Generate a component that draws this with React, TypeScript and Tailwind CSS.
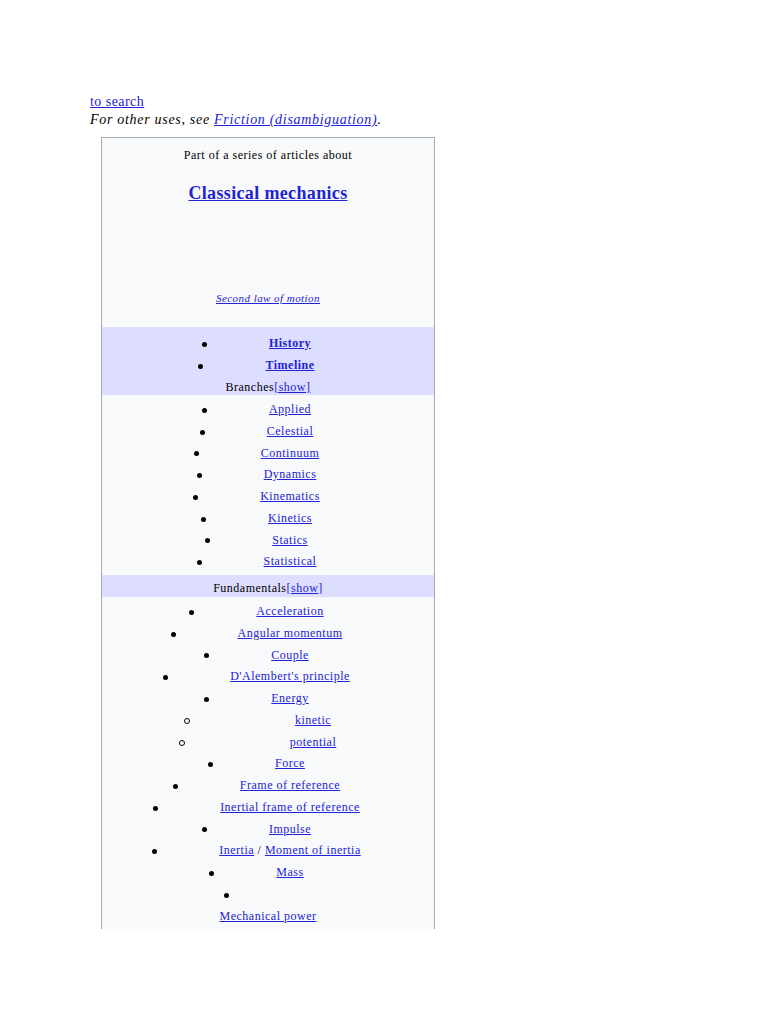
import React from "react";

const link = "text-[#2222d8] underline";

function Dot() {
  return <span className="inline-block w-[5px] h-[5px] rounded-full bg-black align-middle" />;
}

function Ring() {
  return <span className="inline-block w-[6px] h-[6px] rounded-full border border-black align-middle" />;
}

function Item({ children, bold = false }: { children: React.ReactNode; bold?: boolean }) {
  return (
    <div className="h-[21.75px] leading-[21.75px] text-center whitespace-nowrap">
      <span className="inline-block w-[67px] -ml-[67px] text-left">
        <Dot />
      </span>
      <span className={bold ? "font-bold" : ""}>{children}</span>
    </div>
  );
}

function SubItem({ children }: { children: React.ReactNode }) {
  return (
    <div className="h-[21.75px] leading-[21.75px] text-center whitespace-nowrap">
      <span className="inline-block w-[111px] -ml-[111px] text-left">
        <Ring />
      </span>
      <span>{children}</span>
    </div>
  );
}

function L({ children, bold = false }: { children: React.ReactNode; bold?: boolean }) {
  return <a className={link + (bold ? " font-bold text-[#1a1ab8]" : "")}>{children}</a>;
}

export default function App() {
  return (
    <div className="min-h-[1024px] bg-white text-black pl-[90px] pt-[93px]" style={{ fontFamily: '"Liberation Serif", "Times New Roman", serif' }}>
      <div className="text-[14px] leading-[18px] tracking-[0.45px]">
        <a className={link}>to search</a>
      </div>
      <div className="text-[14px] leading-[18px] italic tracking-[0.7px]">
        For other uses, see <a className={link}>Friction (disambiguation)</a>.
      </div>
      <div className="ml-[11px] mt-[8px] w-[334px] h-[792px] border border-b-0 border-[#a2a9b1] bg-[#f8f9fa] text-[12px] tracking-[0.5px]">
        <div className="pt-[8px] text-center leading-[18px]">Part of a series of articles about</div>
        <div className="mt-[17px] text-center text-[18px] leading-[24px] font-bold tracking-[0.35px]">
          <a className="text-[#2222d8] underline">Classical mechanics</a>
        </div>
        <div className="h-[85px]" />
        <div className="text-center italic text-[11px] leading-[16px] tracking-[0.45px]">
          <a className={link}>Second law of motion</a>
        </div>
        <div className="mt-[21px] bg-[#ddddff] pt-[6px] h-[68px]">
          <div className="pl-[44px]">
            <Item><L bold>History</L></Item>
            <Item><L bold>Timeline</L></Item>
          </div>
          <div className="text-center leading-[20px]">
            Branches<a className={link}>[show]</a>
          </div>
        </div>
        <div className="pl-[44px] pt-[4px] pb-[2px]">
          <Item><L>Applied</L></Item>
          <Item><L>Celestial</L></Item>
          <Item><L>Continuum</L></Item>
          <Item><L>Dynamics</L></Item>
          <Item><L>Kinematics</L></Item>
          <Item><L>Kinetics</L></Item>
          <Item><L>Statics</L></Item>
          <Item><L>Statistical</L></Item>
        </div>
        <div className="bg-[#ddddff] h-[22px] pt-[4px] leading-[18px] text-center">
          Fundamentals<a className={link}>[show]</a>
        </div>
        <div className="pl-[44px] pt-[4px]">
          <Item><L>Acceleration</L></Item>
          <Item><L>Angular momentum</L></Item>
          <Item><L>Couple</L></Item>
          <Item><L>D'Alembert's principle</L></Item>
          <Item><L>Energy</L></Item>
          <div className="pl-[46px]">
            <SubItem><L>kinetic</L></SubItem>
            <SubItem><L>potential</L></SubItem>
          </div>
          <Item><L>Force</L></Item>
          <Item><L>Frame of reference</L></Item>
          <Item><L>Inertial frame of reference</L></Item>
          <Item><L>Impulse</L></Item>
          <Item>
            <L>Inertia</L> / <L>Moment of inertia</L>
          </Item>
          <Item><L>Mass</L></Item>
        </div>
        <div className="h-[21.75px] leading-[21.75px] pl-[122px]">
          <Dot />
        </div>
        <div className="h-[21.75px] leading-[21.75px] text-center">
          <L>Mechanical power</L>
        </div>
      </div>
    </div>
  );
}
